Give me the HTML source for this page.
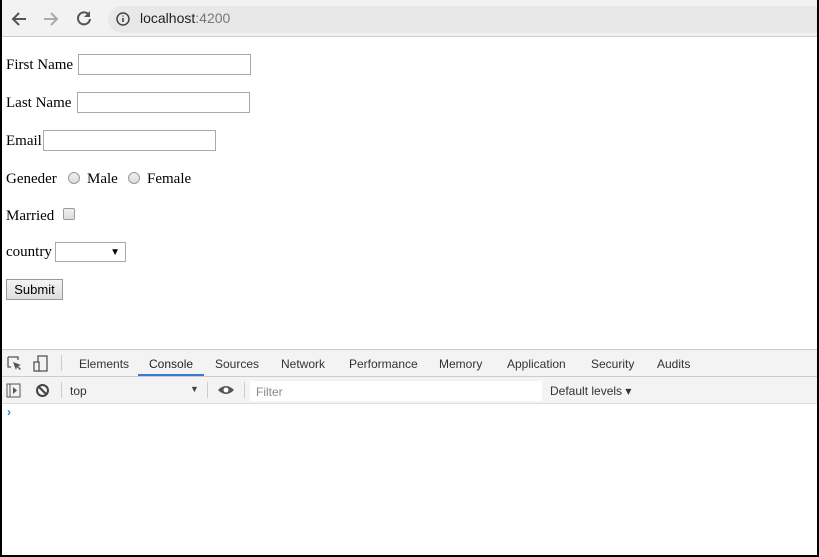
<!DOCTYPE html>
<html><head><style>
*{margin:0;padding:0;box-sizing:border-box}
body{width:819px;height:557px;position:relative;overflow:hidden;background:#fff;font-family:"Liberation Serif",serif;font-size:15px;color:#000}
.a{position:absolute}
.frame{position:absolute;left:0;top:0;width:819px;height:557px;border:2px solid #000;border-top:none;pointer-events:none}
.top{left:0;top:0;width:819px;height:37px;background:#f2f2f2;border-bottom:1px solid #ccc}
.url{left:108px;top:6px;width:720px;height:27px;background:#e8e8e8;border-radius:14px;font-family:"Liberation Sans",sans-serif;font-size:14px;color:#222;padding:4px 0 0 32px}
.inp{position:absolute;height:21px;border:1px solid #a9a9a9;background:#fff}
.rad{position:absolute;width:12px;height:12px;border-radius:50%;border:1px solid #999;background:linear-gradient(#eee,#ddd)}
.dt{font-family:"Liberation Sans",sans-serif;font-size:12px;color:#333}
</style></head><body>
<div class="a top"></div>
<svg class="a" style="left:10px;top:10px" width="18" height="18" viewBox="0 0 18 18"><path d="M16 9H3M9 3L3 9l6 6" stroke="#555" stroke-width="2" fill="none"/></svg>
<svg class="a" style="left:42px;top:10px" width="18" height="18" viewBox="0 0 18 18"><path d="M2 9h13M9 3l6 6-6 6" stroke="#aaa" stroke-width="2" fill="none"/></svg>
<svg class="a" style="left:75px;top:9px" width="18" height="18" viewBox="0 0 18 18"><path d="M14 6A6 6 0 1 0 15 10" stroke="#555" stroke-width="2" fill="none"/><path d="M15 2v6h-6z" fill="#555"/></svg>
<div class="a url"><span style="color:#222">localhost</span><span style="color:#777">:4200</span></div>
<svg class="a" style="left:116px;top:12px" width="14" height="14" viewBox="0 0 14 14"><circle cx="7" cy="7" r="6" stroke="#444" stroke-width="1.5" fill="none"/><path d="M7 6v4M7 3.5v1" stroke="#444" stroke-width="1.6"/></svg>

<div class="a" style="left:6px;top:57px">First Name</div><div class="inp" style="left:78px;top:54px;width:173px"></div>
<div class="a" style="left:6px;top:95px">Last Name</div><div class="inp" style="left:77px;top:92px;width:173px"></div>
<div class="a" style="left:6px;top:133px">Email</div><div class="inp" style="left:43px;top:130px;width:173px"></div>
<div class="a" style="left:6px;top:171px">Geneder</div><div class="rad" style="left:68px;top:172px"></div><div class="a" style="left:87px;top:171px">Male</div><div class="rad" style="left:128px;top:172px"></div><div class="a" style="left:147px;top:171px">Female</div>
<div class="a" style="left:6px;top:208px">Married</div><div class="a" style="left:63px;top:208px;width:12px;height:12px;border:1px solid #999;border-radius:2px;background:linear-gradient(#eee,#ddd)"></div>
<div class="a" style="left:6px;top:244px">country</div><div class="inp" style="left:55px;top:242px;width:71px;height:20px"><span style="position:absolute;right:5px;top:4px;font-size:10px">▼</span></div>
<div class="a" style="left:6px;top:279px;width:57px;height:21px;border:1px solid #999;background:linear-gradient(#f4f4f4,#ddd);font-family:'Liberation Sans',sans-serif;font-size:13px;text-align:center;line-height:19px">Submit</div>

<div class="a" style="left:0;top:349px;width:819px;height:28px;background:#f3f3f3;border-top:1px solid #ccc;border-bottom:1px solid #ccc"></div>
<div class="a" style="left:0;top:377px;width:819px;height:27px;background:#f3f3f3;border-bottom:1px solid #ddd"></div>
<svg class="a" style="left:7px;top:356px" width="16" height="16" viewBox="0 0 16 16"><path d="M1 1h10v3M1 1v10h3" stroke="#555" fill="none" stroke-width="1.3"/><path d="M6 6l8 3-3 1 3 3-1 1-3-3-1 3z" fill="#555"/></svg>
<svg class="a" style="left:33px;top:355px" width="16" height="18" viewBox="0 0 16 18"><rect x="5" y="1" width="9" height="15" stroke="#555" fill="none" stroke-width="1.3"/><rect x="1" y="7" width="5" height="9" stroke="#555" fill="#f3f3f3" stroke-width="1.3"/></svg>
<div class="a" style="left:61px;top:355px;width:1px;height:16px;background:#ccc"></div>
<div class="a dt" style="left:79px;top:357px">Elements</div>
<div class="a dt" style="left:149px;top:357px;color:#222">Console</div>
<div class="a" style="left:138px;top:374px;width:66px;height:2px;background:#3879d9"></div>
<div class="a dt" style="left:215px;top:357px">Sources</div>
<div class="a dt" style="left:281px;top:357px">Network</div>
<div class="a dt" style="left:349px;top:357px">Performance</div>
<div class="a dt" style="left:439px;top:357px">Memory</div>
<div class="a dt" style="left:507px;top:357px">Application</div>
<div class="a dt" style="left:591px;top:357px">Security</div>
<div class="a dt" style="left:657px;top:357px">Audits</div>
<svg class="a" style="left:6px;top:383px" width="16" height="16" viewBox="0 0 16 16"><rect x="1" y="1" width="13" height="13" stroke="#555" fill="none"/><path d="M4 1v13" stroke="#555"/><path d="M7 4l4 3.5-4 3.5z" fill="#555"/></svg>
<svg class="a" style="left:35px;top:383px" width="15" height="15" viewBox="0 0 15 15"><circle cx="7.5" cy="7.5" r="5.5" stroke="#444" stroke-width="2" fill="none"/><path d="M3.5 3.5l8 8" stroke="#444" stroke-width="2"/></svg>
<div class="a" style="left:61px;top:382px;width:1px;height:16px;background:#ccc"></div>
<div class="a dt" style="left:70px;top:384px">top</div>
<div class="a" style="left:190px;top:384px;font-size:9px;color:#444">▼</div>
<div class="a" style="left:207px;top:382px;width:1px;height:16px;background:#ccc"></div>
<svg class="a" style="left:217px;top:384px" width="18" height="12" viewBox="0 0 18 12"><path d="M1 6Q9-2 17 6Q9 14 1 6z" fill="#555"/><circle cx="9" cy="6" r="2.5" fill="#fff"/></svg>
<div class="a" style="left:244px;top:382px;width:1px;height:16px;background:#ccc"></div>
<div class="a" style="left:250px;top:381px;width:292px;height:20px;background:#fff"></div>
<div class="a dt" style="left:256px;top:385px;color:#888">Filter</div>
<div class="a dt" style="left:550px;top:384px">Default levels ▾</div>
<div class="a" style="left:7px;top:405px;color:#3879d9;font-family:'Liberation Sans',sans-serif;font-size:12px;font-weight:bold">›</div>
<div class="frame"></div>
</body></html>
